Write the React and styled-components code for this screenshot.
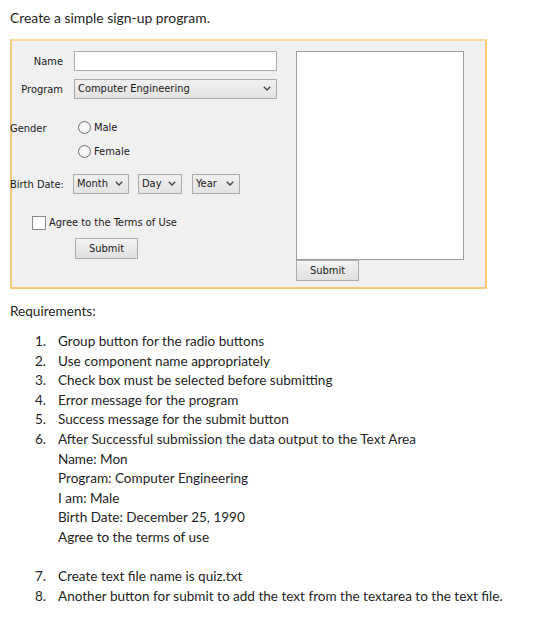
import React from "react";
import styled, { createGlobalStyle } from "styled-components";

const Global = createGlobalStyle`
  html, body { margin: 0; padding: 0; background: #ffffff; }
  body { font-family: Lato, "Open Sans", sans-serif; color: #252525; }
`;

const Page = styled.div`
  width: 533px;
  height: 623px;
  overflow: hidden;
  padding: 0 0 0 10px;
  box-sizing: border-box;
`;

const DocText = styled.p`
  margin: ${(p) => p.$mt || 0}px 0 0 0;
  font-size: ${(p) => p.$fs || 13.6}px;
  line-height: 19.5px;
  height: 19.5px;
`;

const Panel = styled.div`
  margin-top: ${(p) => p.$mt}px;
  width: 477px;
  height: 250px;
  box-sizing: border-box;
  border: 2px solid #f6c878;
  border-top-color: #f8d89c;
  background: #f0f0f0;
  display: flex;
  padding: 10px 0 0 0;
  font-family: "DejaVu Sans Condensed", "Liberation Sans", sans-serif;
  font-size: 11px;
  color: #1a1a1a;
`;

const Form = styled.div`
  width: 272px;
  display: flex;
  flex-direction: column;
`;

const Row = styled.div`
  display: flex;
  align-items: center;
  height: ${(p) => p.$h}px;
  margin-top: ${(p) => p.$mt || 0}px;
  padding-left: ${(p) => p.$pl || 0}px;
`;

const Label = styled.span`
  width: ${(p) => (p.$right ? 51 : 62)}px;
  margin-left: ${(p) => (p.$right ? 0 : -2)}px;
  margin-right: ${(p) => (p.$right ? 11 : 2)}px;
  text-align: ${(p) => (p.$right ? "right" : "left")};
  white-space: nowrap;
  padding-top: 1px;
`;

const Spacer = styled.span`
  width: ${(p) => p.$w}px;
  flex: none;
`;

const TextField = styled.div`
  width: 203px;
  height: 20px;
  box-sizing: border-box;
  border: 1px solid #ababab;
  background: #ffffff;
`;

const Combo = styled.div`
  width: ${(p) => p.$w}px;
  height: 20px;
  box-sizing: border-box;
  border: 1px solid #acacac;
  background: linear-gradient(#f0f0f0, #e3e3e3);
  margin-left: ${(p) => p.$ml || 0}px;
  display: flex;
  align-items: center;
  justify-content: space-between;
  padding: 0 5px 0 3px;
  white-space: nowrap;
`;

const Chevron = () => (
  <svg width="8" height="5" viewBox="0 0 8 5">
    <path d="M0.8 0.8 L4 4 L7.2 0.8" fill="none" stroke="#404040" strokeWidth="1.3" />
  </svg>
);

const Radio = styled.span`
  width: 13px;
  height: 13px;
  box-sizing: border-box;
  border-radius: 50%;
  border: 1px solid #707070;
  background: radial-gradient(circle at 50% 40%, #ffffff, #e6e6e6);
  margin: 0 3px 0 4px;
  flex: none;
`;

const CheckBox = styled.span`
  width: 14px;
  height: 14px;
  box-sizing: border-box;
  border: 1px solid #8a8a8a;
  background: #ffffff;
  margin-right: 3px;
  flex: none;
`;

const Button = styled.div`
  width: 63px;
  height: 21px;
  box-sizing: border-box;
  border: 1px solid #acacac;
  background: linear-gradient(#f3f3f3, #e0e0e0);
  display: flex;
  align-items: center;
  justify-content: center;
  margin-left: ${(p) => p.$ml || 0}px;
`;

const Side = styled.div`
  margin-left: 12px;
  display: flex;
  flex-direction: column;
`;

const TextArea = styled.div`
  width: 168px;
  height: 209px;
  box-sizing: border-box;
  border: 1px solid #9c9c9c;
  background: #ffffff;
`;

const List = styled.div`
  margin-top: ${(p) => p.$mt}px;
  display: grid;
  grid-template-columns: 23px auto;
  padding-left: 25px;
  font-size: 13.55px;
  line-height: 19.6px;
`;

const Num = styled.span`
  grid-column: 1;
`;

const Item = styled.span`
  grid-column: 2;
  white-space: nowrap;
`;

const Blank = styled.span`
  grid-column: 1 / 3;
  height: 19.6px;
`;

const items = [
  "Group button for the radio buttons",
  "Use component name appropriately",
  "Check box must be selected before submitting",
  "Error message for the program",
  "Success message for the submit button",
  "After Successful submission the data output to the Text Area",
];

const sub = [
  "Name: Mon",
  "Program: Computer Engineering",
  "I am: Male",
  "Birth Date: December 25, 1990",
  "Agree to the terms of use",
];

export default function App() {
  return (
    <>
      <Global />
      <Page>
        <DocText $mt={8} $fs={13.9}>Create a simple sign-up program.</DocText>
        <Panel $mt={11}>
          <Form>
            <Row $h={20}>
              <Label $right>Name</Label>
              <TextField />
            </Row>
            <Row $h={20} $mt={8}>
              <Label $right>Program</Label>
              <Combo $w={203}>
                <span>Computer Engineering</span>
                <Chevron />
              </Combo>
            </Row>
            <Row $h={18} $mt={20}>
              <Label>Gender</Label>
              <Radio />
              <span>Male</span>
            </Row>
            <Row $h={18} $mt={6}>
              <Spacer $w={62} />
              <Radio />
              <span>Female</span>
            </Row>
            <Row $h={20} $mt={13}>
              <Label>Birth Date:</Label>
              <Combo $w={56} $ml={-1}>
                <span>Month</span>
                <Chevron />
              </Combo>
              <Combo $w={44} $ml={9}>
                <span>Day</span>
                <Chevron />
              </Combo>
              <Combo $w={48} $ml={10}>
                <span>Year</span>
                <Chevron />
              </Combo>
            </Row>
            <Row $h={16} $mt={21} $pl={20}>
              <CheckBox />
              <span>Agree to the Terms of Use</span>
            </Row>
            <Row $h={21} $mt={7}>
              <Button $ml={63}>Submit</Button>
            </Row>
          </Form>
          <Side>
            <TextArea />
            <Button>Submit</Button>
          </Side>
        </Panel>
        <DocText $mt={13}>Requirements:</DocText>
        <List $mt={11}>
          {items.map((t, i) => (
            <React.Fragment key={i}>
              <Num>{i + 1}.</Num>
              <Item>{t}</Item>
            </React.Fragment>
          ))}
          {sub.map((t) => (
            <Item key={t}>{t}</Item>
          ))}
          <Blank />
          <Num>7.</Num>
          <Item>Create text file name is quiz.txt</Item>
          <Num>8.</Num>
          <Item>Another button for submit to add the text from the textarea to the text file.</Item>
        </List>
      </Page>
    </>
  );
}
